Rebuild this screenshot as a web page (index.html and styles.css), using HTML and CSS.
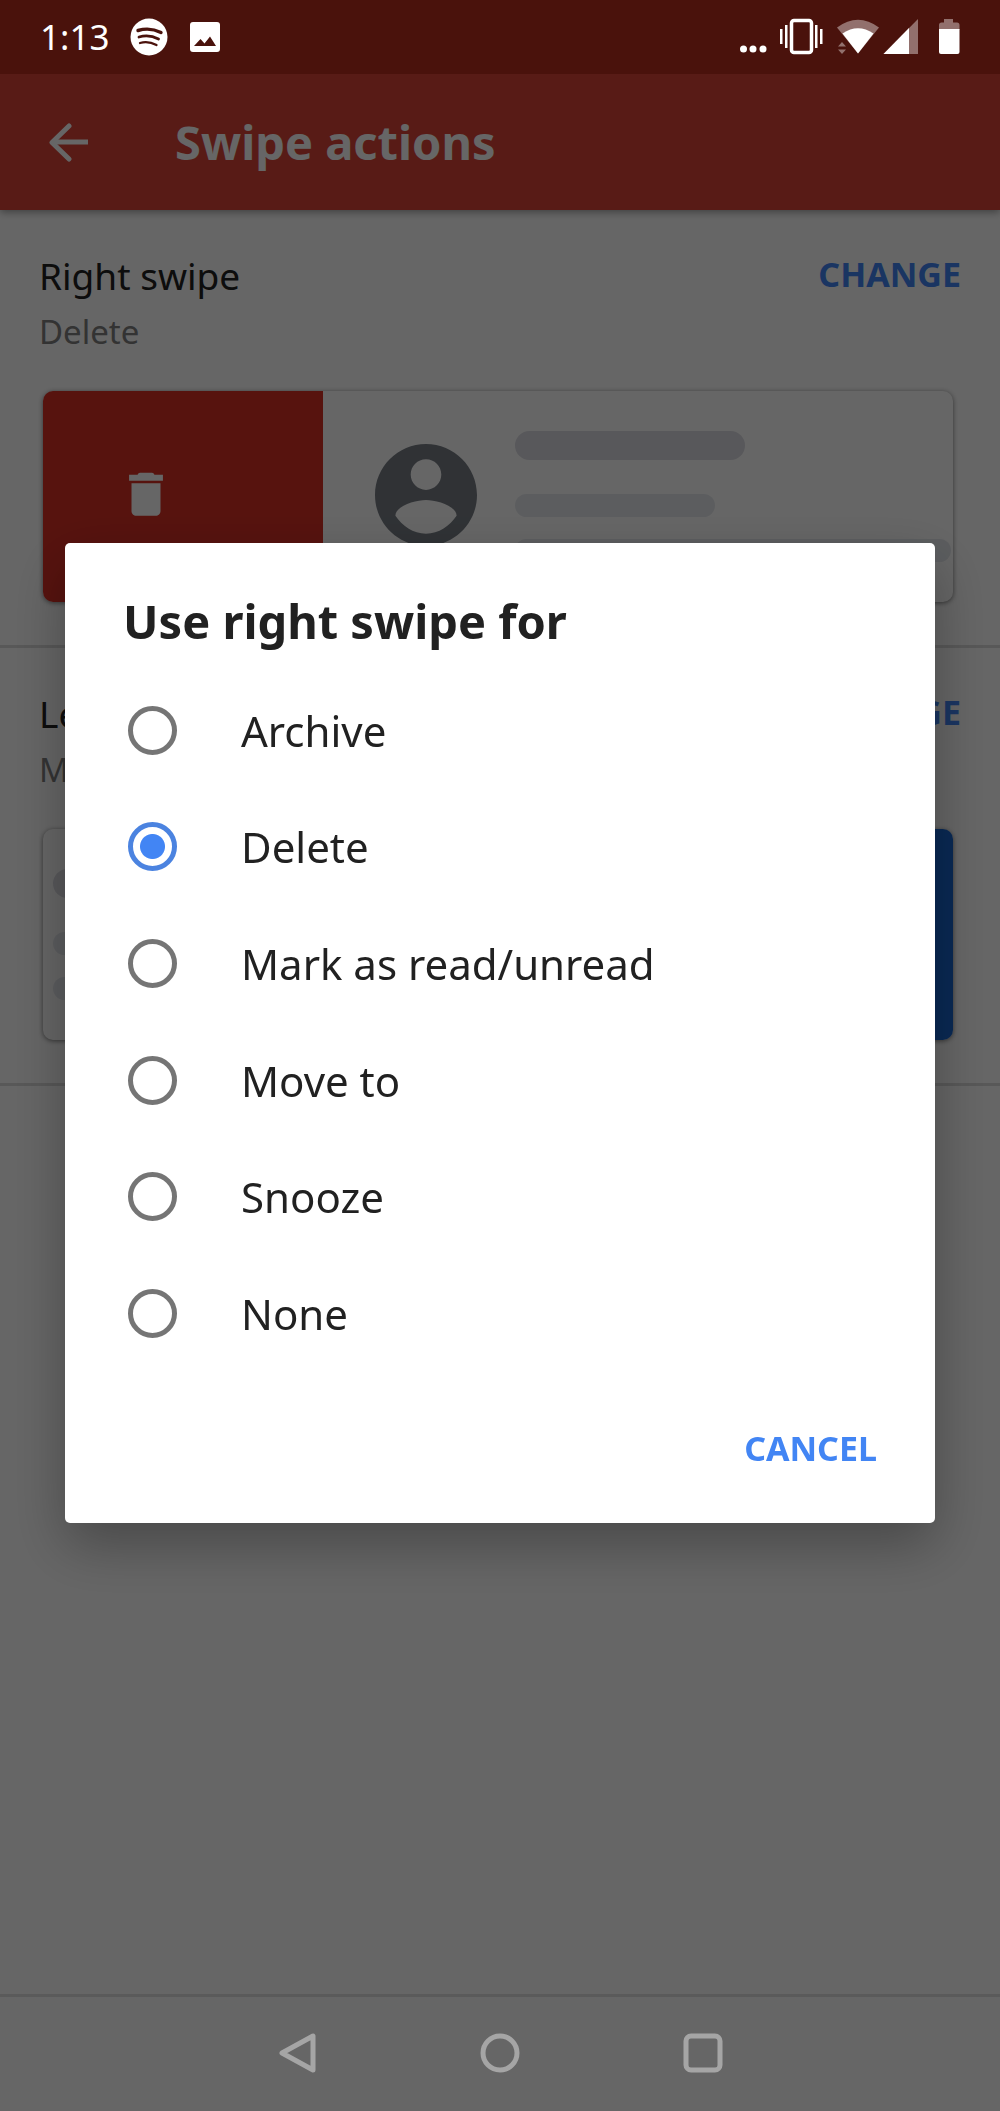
FILE: index.html
```html
<!DOCTYPE html>
<html lang="en">
<head>
<meta charset="utf-8">
<meta name="viewport" content="width=device-width, initial-scale=1">
<title>Swipe actions</title>
<link rel="stylesheet" href="styles.css">
</head>
<body>
<div class="screen">
  <div class="status-bar">
    <div class="status-group">
      <span class="clock">1:13</span>
      <svg width="38" height="38" viewBox="0 0 38 38" aria-hidden="true">
        <circle cx="19" cy="19" r="18.500" fill="#fff"/>
        <g fill="none" stroke="#4a120c" stroke-linecap="round">
          <path d="M8 12.500Q20 9 31 14.500" stroke-width="3.400"/>
          <path d="M9 19Q19 16 28.500 21" stroke-width="2.800"/>
          <path d="M10 25Q18 22.500 26.500 27" stroke-width="2.300"/>
        </g>
      </svg>
      <svg width="32" height="32" viewBox="0 0 32 32" aria-hidden="true">
        <rect x="1" y="1" width="30" height="30" rx="3" fill="#fff"/>
        <path d="M5 25l6.500-7 4 4.500 5.500-7L27 25z" fill="#4a120c"/>
      </svg>
    </div>
    <div class="status-group">
      <svg width="220" height="38" viewBox="0 0 220 38" aria-hidden="true">
        <g fill="#fff">
          <circle cx="3.500" cy="31" r="3.500"/><circle cx="13" cy="31" r="3.500"/><circle cx="23" cy="31" r="3.500"/>
          <path d="M40 11h2.500v15H40zM45 7h2.500v23H45zM75 7h2.500v23H75zM80 11h2.500v15H80z"/>
        </g>
        <rect x="51.500" y="2.500" width="20" height="32" rx="2.500" fill="none" stroke="#fff" stroke-width="3.500"/>
        <path d="M97 9.500Q118-6 139 9.500L118 35.500z" fill="#fff" opacity=".4"/>
        <path d="M102.500 15.500Q118 5 133.500 15.500L118 35.500z" fill="#fff"/>
        <path d="M102 24l4 4.500h-8zM102 36l4-4.500h-8z" fill="#fff" opacity=".4"/>
        <path d="M143.500 36L178 1v35z" fill="#fff" opacity=".4"/>
        <path d="M143.500 36L169 10v26z" fill="#fff"/>
        <path d="M204 1h9v3.500h4q2.500 0 2.500 2.500v5H199V7q0-2.500 2.500-2.500h2.500z" fill="#fff" opacity=".4"/>
        <path d="M199 11h20.500v23q0 2-2 2H201q-2 0-2-2z" fill="#fff"/>
      </svg>
    </div>
  </div>

  <header class="app-bar">
    <button class="icon-button" type="button" aria-label="Back">
      <svg width="40" height="40" viewBox="0 0 40 40" fill="none" stroke="currentColor" stroke-width="5" stroke-linejoin="round" aria-hidden="true">
        <path d="M40 20H4"/><path d="M21 4L4 20.500 21 37" stroke-linecap="round"/>
      </svg>
    </button>
    <h1 class="app-title">Swipe actions</h1>
  </header>

  <main class="settings">
    <section class="setting">
      <div class="setting-head">
        <div>
          <h2 class="setting-name">Right swipe</h2>
          <p class="setting-value">Delete</p>
        </div>
        <button class="text-button" type="button">CHANGE</button>
      </div>
      <div class="preview">
        <div class="swipe swipe-delete">
          <svg width="58" height="58" viewBox="0 0 24 24" fill="currentColor" aria-hidden="true"><path d="M6 19c0 1.100.900 2 2 2h8c1.100 0 2-.900 2-2V7.500H6zM19 4h-3.500q-.3-.8-1-.8h-5q-.7 0-1 .8H5v2.500h14z"/></svg>
        </div>
        <div class="message">
          <svg class="avatar" width="102" height="102" viewBox="2 2 20 20" fill="currentColor" aria-hidden="true"><path d="M12 2C6.480 2 2 6.480 2 12s4.480 10 10 10 10-4.480 10-10S17.520 2 12 2zm0 3c1.660 0 3 1.340 3 3s-1.340 3-3 3-3-1.340-3-3 1.340-3 3-3zm0 14.600c-2.500 0-4.710-1.580-6-3.520.030-1.990 4-3.080 6-3.080s5.970 1.090 6 3.080c-1.290 1.940-3.500 3.520-6 3.520z"/></svg>
          <div class="lines"><span class="line line-from"></span><span class="line line-subject"></span><span class="line line-body"></span></div>
        </div>
      </div>
    </section>
    <section class="setting">
      <div class="setting-head">
        <div>
          <h2 class="setting-name">Left swipe</h2>
          <p class="setting-value">Mark as read/unread</p>
        </div>
        <button class="text-button" type="button">CHANGE</button>
      </div>
      <div class="preview">
        <div class="message message-shifted">
          <div class="lines"><span class="line line-from"></span><span class="line line-subject"></span><span class="line line-body"></span></div>
        </div>
        <div class="swipe swipe-read"></div>
      </div>
    </section>
  </main>

  <nav class="nav-bar" aria-label="System">
    <button class="nav-button" type="button" aria-label="Back">
      <svg width="40" height="40" viewBox="0 0 40 40" aria-hidden="true"><path d="M36 3v34L5 20z"/></svg>
    </button>
    <button class="nav-button" type="button" aria-label="Home">
      <svg width="40" height="40" viewBox="0 0 40 40" aria-hidden="true"><circle cx="20" cy="20" r="17"/></svg>
    </button>
    <button class="nav-button" type="button" aria-label="Recent apps">
      <svg width="40" height="40" viewBox="0 0 40 40" aria-hidden="true"><rect x="3" y="3" width="34" height="34" rx="5"/></svg>
    </button>
  </nav>
</div>

<div class="scrim">
  <form class="dialog" role="dialog" aria-modal="true" aria-labelledby="dialog-title">
    <h2 class="dialog-title" id="dialog-title">Use right swipe for</h2>
    <div class="options" role="radiogroup" aria-labelledby="dialog-title">
      <label class="option"><input class="radio" type="radio" name="action">Archive</label>
      <label class="option"><input class="radio" type="radio" name="action" checked>Delete</label>
      <label class="option"><input class="radio" type="radio" name="action">Mark as read/unread</label>
      <label class="option"><input class="radio" type="radio" name="action">Move to</label>
      <label class="option"><input class="radio" type="radio" name="action">Snooze</label>
      <label class="option"><input class="radio" type="radio" name="action">None</label>
    </div>
    <div class="dialog-actions">
      <button class="text-button" type="button">CANCEL</button>
    </div>
  </form>
</div>
</body>
</html>
```
FILE: styles.css
```css
* { box-sizing: border-box; }

body {
  margin: 0;
  background: #fff;
  color: #212121;
  font-family: "Noto Sans", sans-serif;
}

h1, h2, p { margin: 0; }

button {
  padding: 0;
  border: 0;
  background: none;
  font-family: inherit;
}

svg { display: block; }

.screen {
  display: flex;
  flex-direction: column;
  min-height: 100vh;
}

/* System bars stay above the scrim */
.status-bar {
  position: relative;
  z-index: 2;
  display: flex;
  align-items: center;
  justify-content: space-between;
  height: 74px;
  padding: 0 40px;
  background: #4a120c;
  color: #fff;
}

.status-group {
  display: flex;
  align-items: center;
  gap: 21px;
}

.clock {
  font-size: 35px;
  line-height: 48px;
}

.app-bar {
  position: relative;
  display: flex;
  align-items: center;
  gap: 87px;
  height: 136px;
  padding: 0 48px;
  background: #db4437;
  box-shadow: 0 2px 8px rgba(0, 0, 0, .4);
  color: #fff;
}

.icon-button { color: inherit; }

.app-title {
  font-size: 47px;
  font-weight: 700;
  line-height: 64px;
}

.settings { flex: 1; }

.setting {
  height: 438px;
  padding: 40px 39px 0;
  border-bottom: 3px solid #dcdcdc;
}

.setting-head {
  display: flex;
  justify-content: space-between;
  align-items: flex-start;
  height: 141px;
}

.setting-name {
  font-size: 37px;
  font-weight: 400;
  line-height: 52px;
}

.setting-value {
  color: #808080;
  font-size: 33px;
  line-height: 60px;
}

.text-button {
  color: #4285f4;
  font-size: 34px;
  font-weight: 700;
  line-height: 48px;
}

.preview {
  display: flex;
  height: 211px;
  margin: 0 8px 0 4px;
  overflow: hidden;
  border-radius: 10px;
  background: #fff;
  box-shadow: 0 1px 5px rgba(0, 0, 0, .5);
}

.swipe {
  display: flex;
  align-items: center;
  flex: 0 0 280px;
  padding: 0 0 6px 74px;
  color: #fff;
}

.swipe-delete { background: #d93025; }
.swipe-read { background: #1967d2; }

.message {
  display: flex;
  align-items: center;
  flex: 1;
  gap: 38px;
  min-width: 0;
  padding-left: 52px;
  overflow: hidden;
}

.message-shifted { padding-left: 10px; }

.avatar {
  flex: none;
  margin-bottom: 4px;
  color: #787e86;
}

.lines {
  display: grid;
  flex: none;
}

.line {
  height: 23px;
  border-radius: 15px;
  background: #e6e9ee;
}

.line-from { width: 230px; height: 29px; margin-bottom: 34px; background: #dcdce3; }
.line-subject { width: 200px; margin-bottom: 22px; }
.line-body { width: 436px; }

.nav-bar {
  position: relative;
  z-index: 2;
  display: flex;
  align-items: center;
  justify-content: center;
  gap: 163px;
  height: 117px;
  padding-bottom: 3px;
  border-top: 3px solid #5a5a5a;
  background: #666;
}

.nav-button svg {
  fill: none;
  stroke: #a5a5a5;
  stroke-width: 5;
  stroke-linejoin: round;
}

.scrim {
  position: fixed;
  inset: 0;
  z-index: 1;
  display: flex;
  align-items: center;
  padding: 74px 65px 119px;
  background: rgba(0, 0, 0, .6);
}

.dialog {
  flex: 1;
  padding: 46px 58px;
  border-radius: 5px;
  background: #fff;
  box-shadow: 0 22px 55px rgba(0, 0, 0, .3);
}

.dialog-title {
  font-size: 47px;
  font-weight: 700;
  line-height: 64px;
}

.options {
  display: grid;
  grid-auto-rows: 1fr;
  height: 700px;
  margin-top: 19px;
}

.option {
  display: flex;
  align-items: center;
  gap: 64px;
  padding-left: 5px;
  font-size: 42px;
}

.radio {
  width: 49px;
  height: 49px;
  margin: 0;
  border: 5px solid #757575;
  border-radius: 50%;
  appearance: none;
}

.radio:checked {
  border-color: #4b83e0;
  background: radial-gradient(circle, #4285f4 12px, transparent 13px);
}

.dialog-actions {
  display: flex;
  justify-content: flex-end;
  padding: 52px 0 5px;
}
```
